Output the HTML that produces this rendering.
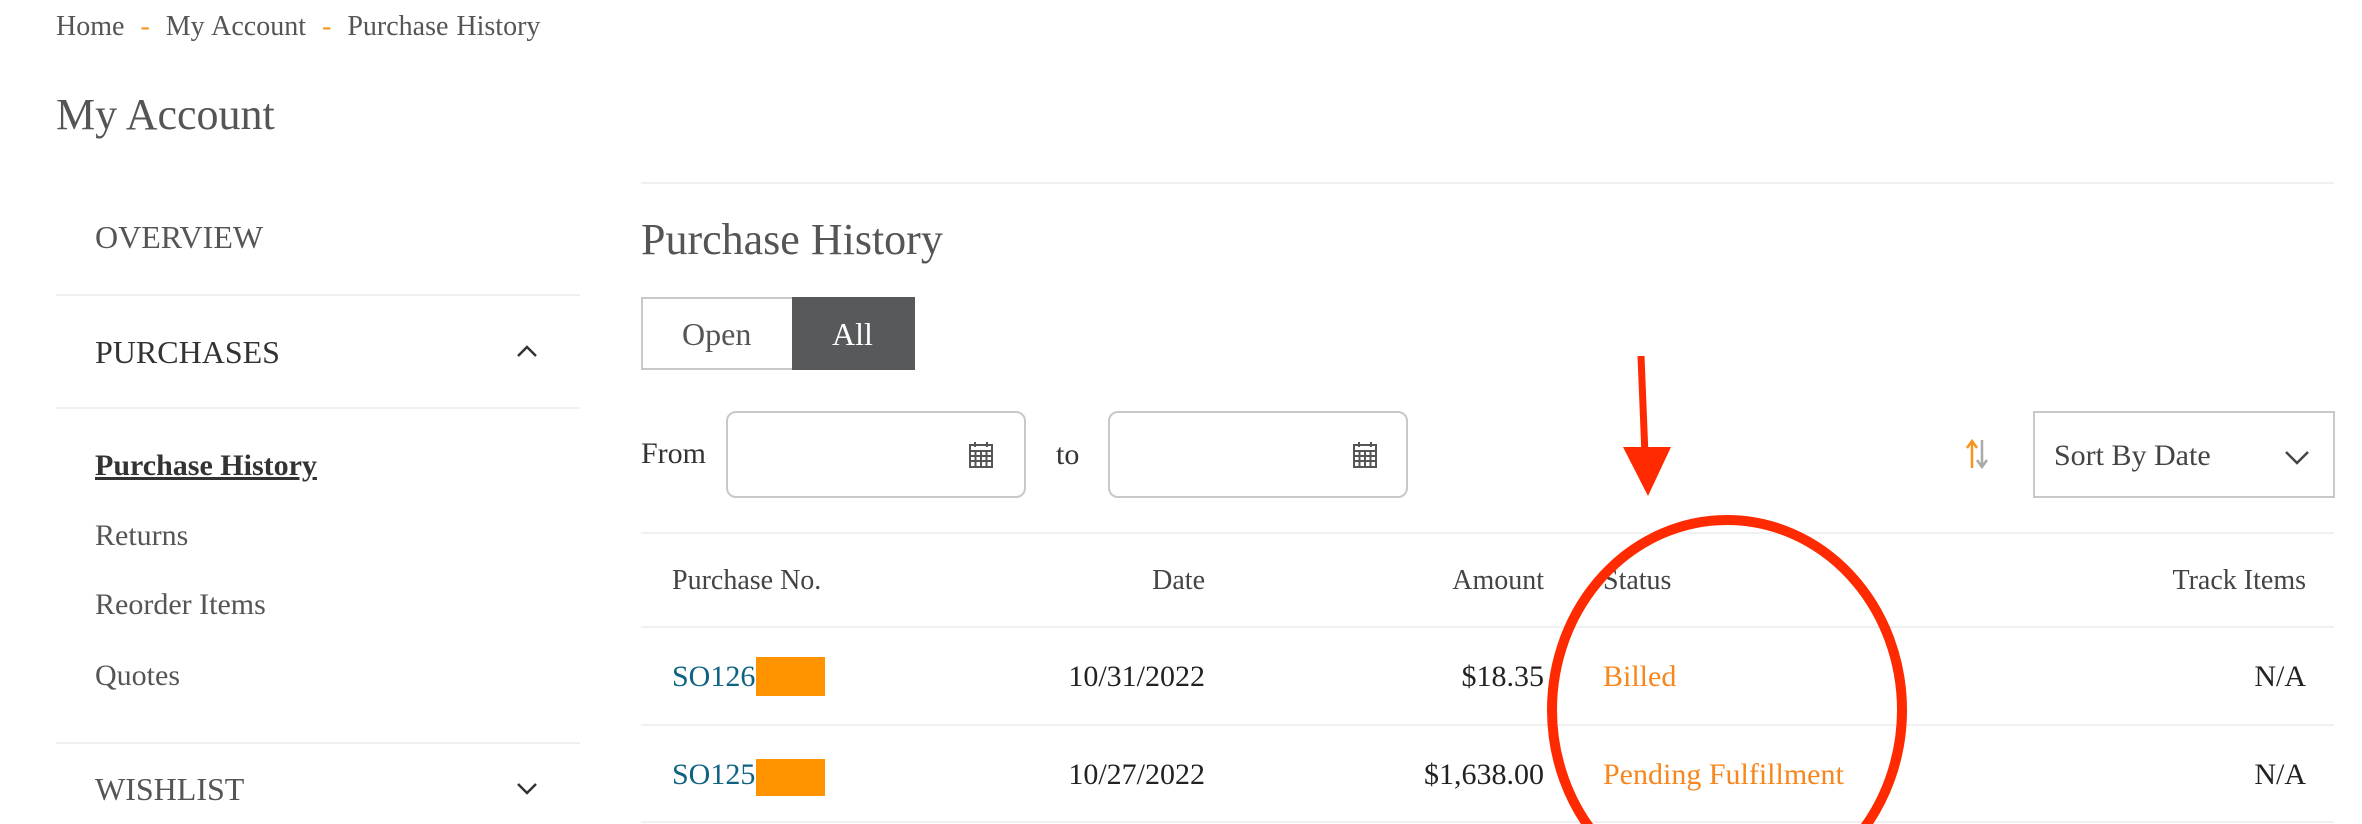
<!DOCTYPE html>
<html style="overflow:hidden;height:824px"><head><meta charset="utf-8"><style>
body{margin:0;width:2362px;height:824px;background:#fff;overflow:hidden;position:relative;font-family:"Liberation Serif",serif;color:#4a4a4a}
.a{position:absolute;white-space:nowrap;line-height:1}
.hl{position:absolute;height:2px;background:#f0f0f0}
.c{transform:translateY(-50%)}
.r{text-align:right}
.box{position:absolute;border:2px solid #c8c8c8;box-sizing:border-box;background:#fff}
.or{color:#f7941d}
</style></head><body>
<div class="a c" style="left:56px;top:27px;font-size:28px;color:#555;word-spacing:1px">Home <span class="or">&nbsp;-&nbsp;</span> My Account <span class="or">&nbsp;-&nbsp;</span> Purchase History</div>
<div class="a c" style="left:56px;top:115px;font-size:44px;color:#555">My Account</div>

<div class="hl" style="left:641px;width:1693px;top:182px"></div>
<div class="a c" style="left:95px;top:237px;font-size:32px;color:#555">OVERVIEW</div>
<div class="hl" style="left:56px;width:524px;top:294px"></div>
<div class="a c" style="left:95px;top:352px;font-size:32px;color:#333">PURCHASES</div>
<svg class="a" style="left:516px;top:344px" width="22" height="14"><path d="M2 12 L11 3 L20 12" fill="none" stroke="#333" stroke-width="2.5"/></svg>
<div class="hl" style="left:56px;width:524px;top:407px"></div>
<div class="a c" style="left:95px;top:466px;font-size:30px;font-weight:bold;text-decoration:underline;color:#333">Purchase History</div>
<div class="a c" style="left:95px;top:536px;font-size:30px;color:#555">Returns</div>
<div class="a c" style="left:95px;top:605px;font-size:30px;color:#555">Reorder Items</div>
<div class="a c" style="left:95px;top:676px;font-size:30px;color:#555">Quotes</div>
<div class="hl" style="left:56px;width:524px;top:742px"></div>
<div class="a c" style="left:95px;top:789px;font-size:32px;color:#555">WISHLIST</div>
<svg class="a" style="left:516px;top:782px" width="22" height="14"><path d="M2 2 L11 11 L20 2" fill="none" stroke="#333" stroke-width="2.5"/></svg>

<div class="a c" style="left:641px;top:240px;font-size:44px;color:#555">Purchase History</div>
<div class="box" style="left:641px;top:297px;width:274px;height:73px"></div>
<div class="a" style="left:792px;top:297px;width:123px;height:73px;background:#58595b"></div>
<div class="a c" style="left:682px;top:334px;font-size:32px;color:#555">Open</div>
<div class="a c" style="left:832px;top:334px;font-size:32px;color:#fff">All</div>

<div class="a c" style="left:641px;top:454px;font-size:30px;color:#333">From</div>
<div class="box" style="left:726px;top:411px;width:300px;height:87px;border-radius:10px"></div>
<div class="a c" style="left:1056px;top:455px;font-size:30px;color:#333">to</div>
<div class="box" style="left:1108px;top:411px;width:300px;height:87px;border-radius:10px"></div>
<svg class="a" style="left:968px;top:440px" width="26" height="29"><g fill="none" stroke="#555" stroke-width="2"><rect x="2" y="5" width="22" height="22"/><path d="M2 11H24M2 16H24M2 21H24M7.5 11V27M13 11V27M18.5 11V27M7 2V7M19 2V7"/></g></svg>
<svg class="a" style="left:1352px;top:440px" width="26" height="29"><g fill="none" stroke="#555" stroke-width="2"><rect x="2" y="5" width="22" height="22"/><path d="M2 11H24M2 16H24M2 21H24M7.5 11V27M13 11V27M18.5 11V27M7 2V7M19 2V7"/></g></svg>

<svg class="a" style="left:1964px;top:438px" width="26" height="32"><path d="M8 30V4M3 10L8 3L13 10" fill="none" stroke="#f7941d" stroke-width="2.5"/><path d="M18 2V28M13 22L18 29L23 22" fill="none" stroke="#aaa" stroke-width="2.5"/></svg>
<div class="box" style="left:2033px;top:411px;width:302px;height:87px"></div>
<div class="a c" style="left:2054px;top:456px;font-size:30px;color:#444">Sort By Date</div>
<svg class="a" style="left:2284px;top:450px" width="26" height="16"><path d="M2 2 L13 13 L24 2" fill="none" stroke="#444" stroke-width="2.5"/></svg>

<div class="hl" style="left:641px;width:1693px;top:532px"></div>
<div class="a c" style="left:672px;top:581px;font-size:28px;color:#444">Purchase No.</div>
<div class="a c r" style="right:1157px;top:581px;font-size:28px;color:#444">Date</div>
<div class="a c r" style="right:818px;top:581px;font-size:28px;color:#444">Amount</div>
<div class="a c" style="left:1603px;top:581px;font-size:28px;color:#444">Status</div>
<div class="a c r" style="right:56px;top:581px;font-size:28px;color:#444">Track Items</div>
<div class="hl" style="left:641px;width:1693px;top:626px"></div>

<div class="a c" style="left:672px;top:677px;font-size:30px;color:#0e6282">SO126</div>
<div class="a" style="left:756px;top:657px;width:69px;height:39px;background:#ff9400"></div>
<div class="a c r" style="right:1157px;top:677px;font-size:30px;color:#222">10/31/2022</div>
<div class="a c r" style="right:818px;top:677px;font-size:30px;color:#222">$18.35</div>
<div class="a c" style="left:1603px;top:677px;font-size:30px;color:#f7861d">Billed</div>
<div class="a c r" style="right:56px;top:677px;font-size:30px;color:#222">N/A</div>
<div class="hl" style="left:641px;width:1693px;top:724px"></div>

<div class="a c" style="left:672px;top:775px;font-size:30px;color:#0e6282">SO125</div>
<div class="a" style="left:756px;top:759px;width:69px;height:37px;background:#ff9400"></div>
<div class="a c r" style="right:1157px;top:775px;font-size:30px;color:#222">10/27/2022</div>
<div class="a c r" style="right:818px;top:775px;font-size:30px;color:#222">$1,638.00</div>
<div class="a c" style="left:1603px;top:775px;font-size:30px;color:#f7861d">Pending Fulfillment</div>
<div class="a c r" style="right:56px;top:775px;font-size:30px;color:#222">N/A</div>
<div class="hl" style="left:641px;width:1693px;top:821px"></div>

<svg class="a" style="left:0;top:0" width="2362" height="824">
<path d="M1641 356 L1645 455" stroke="#ff2a00" stroke-width="7" fill="none"/>
<path d="M1623 447 L1671 447 L1648 496 Z" fill="#ff2a00"/>
<ellipse cx="1727" cy="710" rx="175" ry="190" fill="none" stroke="#ff2a00" stroke-width="10"/>
</svg>
</body></html>
